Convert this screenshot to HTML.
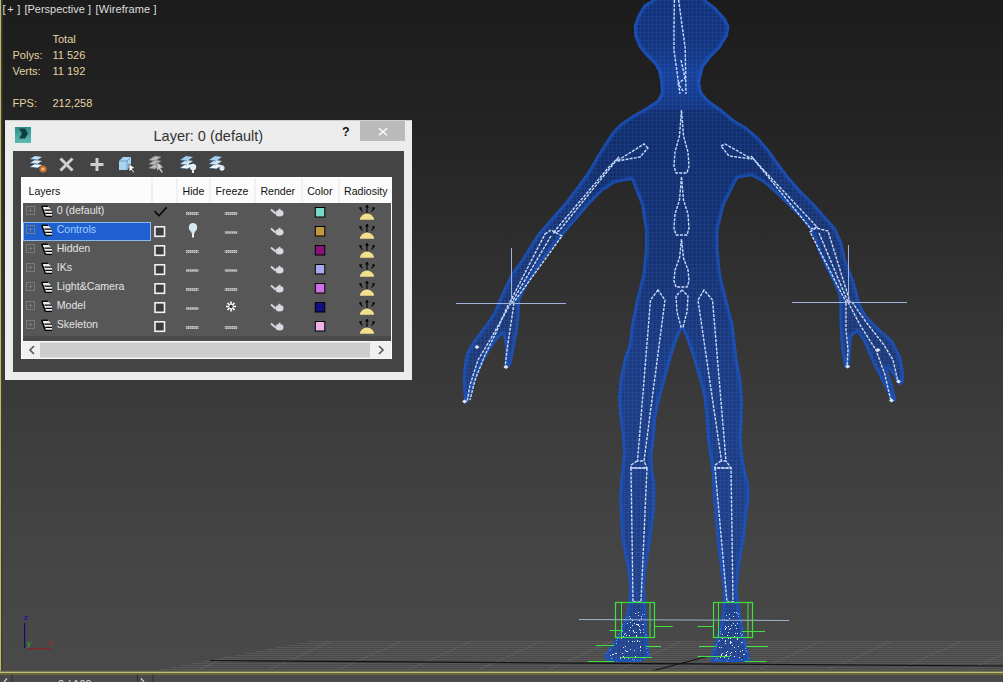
<!DOCTYPE html>
<html><head><meta charset="utf-8">
<style>
html,body{margin:0;padding:0;width:1003px;height:682px;overflow:hidden;background:#1e1e1e;}
svg{position:absolute;left:0;top:0;font-family:"Liberation Sans",sans-serif;}
</style></head><body>
<svg width="1003" height="682" viewBox="0 0 1003 682">
 <defs>
  <linearGradient id="bg" x1="0" y1="0" x2="0" y2="674" gradientUnits="userSpaceOnUse">
   <stop offset="0" stop-color="#1c1c1c"/>
   <stop offset="0.2" stop-color="#242424"/>
   <stop offset="0.5" stop-color="#363636"/>
   <stop offset="0.8" stop-color="#444444"/>
   <stop offset="1" stop-color="#4a4a4a"/>
  </linearGradient>
  <linearGradient id="armL" x1="628" y1="0" x2="545" y2="0" gradientUnits="userSpaceOnUse">
   <stop offset="0" stop-color="#fff"/><stop offset="1" stop-color="#d8d8d8"/>
  </linearGradient>
  <linearGradient id="armR" x1="738" y1="0" x2="820" y2="0" gradientUnits="userSpaceOnUse">
   <stop offset="0" stop-color="#fff"/><stop offset="1" stop-color="#d8d8d8"/>
  </linearGradient>
  <linearGradient id="torsoDark" x1="0" y1="90" x2="0" y2="360" gradientUnits="userSpaceOnUse">
   <stop offset="0" stop-color="#000" stop-opacity="0"/>
   <stop offset="0.12" stop-color="#000" stop-opacity="0.13"/>
   <stop offset="0.7" stop-color="#000" stop-opacity="0.11"/>
   <stop offset="1" stop-color="#000" stop-opacity="0"/>
  </linearGradient>
  <filter id="soft" x="-5%" y="-5%" width="110%" height="110%"><feGaussianBlur stdDeviation="1.1"/></filter>
  <linearGradient id="headBright" x1="0" y1="0" x2="0" y2="110" gradientUnits="userSpaceOnUse">
   <stop offset="0" stop-color="#1a4aa8" stop-opacity="0.05"/>
   <stop offset="0.4" stop-color="#1a4aa8" stop-opacity="0.15"/>
   <stop offset="0.65" stop-color="#1f55c0" stop-opacity="0.45"/>
   <stop offset="1" stop-color="#1f55c0" stop-opacity="0.2"/>
  </linearGradient>
  <mask id="amask" maskUnits="userSpaceOnUse" x="0" y="0" width="1003" height="682">
   <rect x="0" y="0" width="1003" height="682" fill="#fff"/>
   <rect x="440" y="120" width="188" height="300" fill="url(#armL)"/>
   <rect x="738" y="120" width="190" height="300" fill="url(#armR)"/>
  </mask>
  <pattern id="mesh" width="4" height="4" patternUnits="userSpaceOnUse">
   <path d="M0,0.5 H4 M0.5,0 V4" stroke="#3a70d0" stroke-width="1"/>
  </pattern>
  <pattern id="vdots" width="5" height="4" patternUnits="userSpaceOnUse">
   <rect x="1" y="1" width="1" height="1" fill="#d8e4ff"/><rect x="3" y="3" width="1" height="1" fill="#b8ccf0"/>
  </pattern>
  <pattern id="dots" width="2" height="2" patternUnits="userSpaceOnUse">
   <rect width="2" height="2" fill="#9a9a9a"/>
   <rect width="1" height="1" fill="#c8c8c8"/>
  </pattern>
 </defs>
 <rect x="0" y="0" width="1003" height="682" fill="url(#bg)"/>
 <g id="grid">
 <line x1="308.4" y1="641.5" x2="1003" y2="641.5" stroke="#585858" stroke-width="1"/>
 <line x1="297.8" y1="643.5" x2="1003" y2="643.5" stroke="#585858" stroke-width="1"/>
 <line x1="287.2" y1="645.5" x2="1003" y2="645.5" stroke="#585858" stroke-width="1"/>
 <line x1="276.7" y1="647.5" x2="1003" y2="647.5" stroke="#585858" stroke-width="1"/>
 <line x1="266.1" y1="649.5" x2="1003" y2="649.5" stroke="#585858" stroke-width="1"/>
 <line x1="255.6" y1="651.5" x2="1003" y2="651.5" stroke="#585858" stroke-width="1"/>
 <line x1="245.0" y1="653.5" x2="1003" y2="653.5" stroke="#585858" stroke-width="1"/>
 <line x1="234.5" y1="655.5" x2="1003" y2="655.5" stroke="#585858" stroke-width="1"/>
 <line x1="223.9" y1="657.5" x2="1003" y2="657.5" stroke="#585858" stroke-width="1"/>
 <line x1="213.3" y1="659.5" x2="1003" y2="659.5" stroke="#585858" stroke-width="1"/>
 <line x1="202.8" y1="661.5" x2="1003" y2="661.5" stroke="#585858" stroke-width="1"/>
 <line x1="192.2" y1="663.5" x2="1003" y2="663.5" stroke="#585858" stroke-width="1"/>
 <line x1="181.7" y1="665.5" x2="1003" y2="665.5" stroke="#585858" stroke-width="1"/>
 <line x1="171.1" y1="667.5" x2="1003" y2="667.5" stroke="#585858" stroke-width="1"/>
 <line x1="160.6" y1="669.5" x2="1003" y2="669.5" stroke="#585858" stroke-width="1"/>
 <clipPath id="gclip"><polygon points="150,671 311,640.5 1003,640.5 1003,671"/></clipPath><g clip-path="url(#gclip)">
 <line x1="200" y1="669" x2="262" y2="641" stroke="#5e5e5e" stroke-width="1"/>
 <line x1="270" y1="669" x2="332" y2="641" stroke="#5e5e5e" stroke-width="1"/>
 <line x1="340" y1="669" x2="402" y2="641" stroke="#5e5e5e" stroke-width="1"/>
 <line x1="410" y1="669" x2="472" y2="641" stroke="#5e5e5e" stroke-width="1"/>
 <line x1="480" y1="669" x2="542" y2="641" stroke="#5e5e5e" stroke-width="1"/>
 <line x1="550" y1="669" x2="612" y2="641" stroke="#5e5e5e" stroke-width="1"/>
 <line x1="620" y1="669" x2="682" y2="641" stroke="#5e5e5e" stroke-width="1"/>
 <line x1="690" y1="669" x2="752" y2="641" stroke="#5e5e5e" stroke-width="1"/>
 <line x1="760" y1="669" x2="822" y2="641" stroke="#5e5e5e" stroke-width="1"/>
 <line x1="830" y1="669" x2="892" y2="641" stroke="#5e5e5e" stroke-width="1"/>
 <line x1="900" y1="669" x2="962" y2="641" stroke="#5e5e5e" stroke-width="1"/>
 <line x1="970" y1="669" x2="1032" y2="641" stroke="#5e5e5e" stroke-width="1"/>
 <line x1="1040" y1="669" x2="1102" y2="641" stroke="#5e5e5e" stroke-width="1"/>
 </g>
 <line x1="210" y1="660.5" x2="1003" y2="666" stroke="#111" stroke-width="1.2"/>
 <line x1="652" y1="671" x2="709" y2="656" stroke="#111" stroke-width="1"/>
 </g>
 <clipPath id="bclip"><path d="M654,-6 L652,0 L643.9,4.8 L638,14.4 L633.8,26.3 L634.4,35.9 L639.1,47.8 L646.3,56.2 L654.7,64.6 L658.5,72 L660.5,82.9 L661,92.4 L657.2,100 L645.8,107.7 L632.4,115.3 L621,123 L613,131 L607.5,139 L596.5,156.4 L588.3,170.8 L578,185.2 L565.7,201.6 L551.3,218 L537,234.5 L526,252 L519.6,262 L510.8,274 L505,286 L499,299.2 L493.4,312.9 L482.1,329 L472.4,342 L466,353.2 L463.5,367.7 L462.7,380.6 L463.5,393.5 L464.4,403.2 L467.6,403.2 L472.4,390.3 L477.3,375.8 L483.7,361.3 L490.2,350 L498.2,338.7 L503,333.9 L505.5,348.4 L504.7,364.5 L507.1,369.4 L511.1,364.5 L514.4,348.4 L517.6,332.3 L519.5,316 L520,300 L528.4,283 L541,263.2 L553.4,246.8 L565.7,232.4 L578,218 L590.3,203.7 L602.7,191.3 L615,183.1 L631.4,180 L641.2,205 L645,229.8 L645,249.8 L642.4,274.7 L636.2,299.6 L631.2,324.5 L628.7,345 L623.8,359 L620,378.1 L618.1,397.2 L619.5,416.3 L622,435.3 L623,454.7 L621.5,469.3 L620,484 L619.3,498.6 L620,513.3 L621.5,540 L624.5,555.3 L628,574.4 L629.6,590 L627.2,609.3 L624,621 L618,635.7 L611,646 L604,656 L608,662 L640,662 L650,656 L648.5,646 L647,631.3 L646.3,609.3 L644.8,590 L645.8,574.4 L648.5,555.3 L651,540 L654.5,513.3 L655.3,498.6 L655.3,484 L653,469.3 L652.3,454.7 L654.5,440 L656,420 L658.5,405 L664.5,383.3 L672.5,354 L678,338 L682,329 L686,338 L691.6,354 L700.4,383.3 L703.5,397 L705,410 L706,425 L707.1,440 L709.3,454.7 L711.5,469.3 L712.3,484 L713,498.6 L714.5,513.3 L716.7,540 L718.5,555.3 L721,574.4 L723,590 L722.5,609.3 L719.6,628.4 L715.2,641.6 L711.5,653.3 L710.8,662 L750.4,662 L749,653.3 L746,641.6 L743,628.4 L740.1,609.3 L737.3,590 L739,574.4 L741.5,555.3 L744.5,540 L747.4,513.3 L749.6,498.6 L749,484 L745.2,469.3 L743,454.7 L741.6,440 L742.5,420 L743,400 L741.1,378.1 L737.3,359 L735.8,345 L733.4,324.5 L727.1,299.6 L721,274.7 L718.4,249.8 L718.4,229.8 L724.6,205 L737,180 L739.4,178 L751.7,176.3 L764,183.3 L778,195.7 L790.4,208 L801,218.5 L809.7,229 L815,240 L818,251 L825.5,267 L832.5,281 L838.1,293.3 L839.6,305 L839.5,320 L840,330 L841.1,348.4 L844.4,367.7 L849.2,367.7 L850.8,351.6 L851.6,337 L857.3,332.3 L863.7,342 L870.2,358 L878.2,374.2 L886.3,390.3 L891,401.6 L896.5,401 L893,386 L887,368 L893,375 L899.2,385.5 L904,382.3 L904,372.6 L900.8,356.5 L892.7,340.3 L879.8,329 L866.9,316 L860,303 L854,280 L846,260 L842.2,242.7 L836,228.3 L827.3,218.5 L815,204.5 L801,190.4 L788.6,176.3 L778,162.2 L769.3,150 L758.7,137.6 L746.4,127 L734,119.5 L722,109.6 L708.7,100 L702,92.4 L700,82.9 L701.3,76 L703.7,67 L711,57.4 L720.5,47.8 L727.7,35.9 L729.4,26.3 L725.3,18 L715.7,7.2 L706,0 L704,-6 Z"/></clipPath>
 <path d="M654,-6 L652,0 L643.9,4.8 L638,14.4 L633.8,26.3 L634.4,35.9 L639.1,47.8 L646.3,56.2 L654.7,64.6 L658.5,72 L660.5,82.9 L661,92.4 L657.2,100 L645.8,107.7 L632.4,115.3 L621,123 L613,131 L607.5,139 L596.5,156.4 L588.3,170.8 L578,185.2 L565.7,201.6 L551.3,218 L537,234.5 L526,252 L519.6,262 L510.8,274 L505,286 L499,299.2 L493.4,312.9 L482.1,329 L472.4,342 L466,353.2 L463.5,367.7 L462.7,380.6 L463.5,393.5 L464.4,403.2 L467.6,403.2 L472.4,390.3 L477.3,375.8 L483.7,361.3 L490.2,350 L498.2,338.7 L503,333.9 L505.5,348.4 L504.7,364.5 L507.1,369.4 L511.1,364.5 L514.4,348.4 L517.6,332.3 L519.5,316 L520,300 L528.4,283 L541,263.2 L553.4,246.8 L565.7,232.4 L578,218 L590.3,203.7 L602.7,191.3 L615,183.1 L631.4,180 L641.2,205 L645,229.8 L645,249.8 L642.4,274.7 L636.2,299.6 L631.2,324.5 L628.7,345 L623.8,359 L620,378.1 L618.1,397.2 L619.5,416.3 L622,435.3 L623,454.7 L621.5,469.3 L620,484 L619.3,498.6 L620,513.3 L621.5,540 L624.5,555.3 L628,574.4 L629.6,590 L627.2,609.3 L624,621 L618,635.7 L611,646 L604,656 L608,662 L640,662 L650,656 L648.5,646 L647,631.3 L646.3,609.3 L644.8,590 L645.8,574.4 L648.5,555.3 L651,540 L654.5,513.3 L655.3,498.6 L655.3,484 L653,469.3 L652.3,454.7 L654.5,440 L656,420 L658.5,405 L664.5,383.3 L672.5,354 L678,338 L682,329 L686,338 L691.6,354 L700.4,383.3 L703.5,397 L705,410 L706,425 L707.1,440 L709.3,454.7 L711.5,469.3 L712.3,484 L713,498.6 L714.5,513.3 L716.7,540 L718.5,555.3 L721,574.4 L723,590 L722.5,609.3 L719.6,628.4 L715.2,641.6 L711.5,653.3 L710.8,662 L750.4,662 L749,653.3 L746,641.6 L743,628.4 L740.1,609.3 L737.3,590 L739,574.4 L741.5,555.3 L744.5,540 L747.4,513.3 L749.6,498.6 L749,484 L745.2,469.3 L743,454.7 L741.6,440 L742.5,420 L743,400 L741.1,378.1 L737.3,359 L735.8,345 L733.4,324.5 L727.1,299.6 L721,274.7 L718.4,249.8 L718.4,229.8 L724.6,205 L737,180 L739.4,178 L751.7,176.3 L764,183.3 L778,195.7 L790.4,208 L801,218.5 L809.7,229 L815,240 L818,251 L825.5,267 L832.5,281 L838.1,293.3 L839.6,305 L839.5,320 L840,330 L841.1,348.4 L844.4,367.7 L849.2,367.7 L850.8,351.6 L851.6,337 L857.3,332.3 L863.7,342 L870.2,358 L878.2,374.2 L886.3,390.3 L891,401.6 L896.5,401 L893,386 L887,368 L893,375 L899.2,385.5 L904,382.3 L904,372.6 L900.8,356.5 L892.7,340.3 L879.8,329 L866.9,316 L860,303 L854,280 L846,260 L842.2,242.7 L836,228.3 L827.3,218.5 L815,204.5 L801,190.4 L788.6,176.3 L778,162.2 L769.3,150 L758.7,137.6 L746.4,127 L734,119.5 L722,109.6 L708.7,100 L702,92.4 L700,82.9 L701.3,76 L703.7,67 L711,57.4 L720.5,47.8 L727.7,35.9 L729.4,26.3 L725.3,18 L715.7,7.2 L706,0 L704,-6 Z" fill="#0a3cb0" fill-opacity="0.6" mask="url(#amask)"/>
 <g clip-path="url(#bclip)">
  <rect x="450" y="0" width="470" height="670" fill="url(#mesh)" opacity="0.22"/>
  <rect x="647" y="652" width="1" height="1" fill="#dfe8ff"/><rect x="628" y="641" width="1" height="1" fill="#dfe8ff"/><rect x="637" y="640" width="1" height="1" fill="#dfe8ff"/><rect x="623" y="636" width="1" height="1" fill="#dfe8ff"/><rect x="626" y="617" width="1" height="1" fill="#dfe8ff"/><rect x="609" y="650" width="1" height="1" fill="#dfe8ff"/><rect x="643" y="632" width="1" height="1" fill="#dfe8ff"/><rect x="627" y="623" width="1" height="1" fill="#dfe8ff"/><rect x="636" y="636" width="1" height="1" fill="#dfe8ff"/><rect x="616" y="643" width="1" height="1" fill="#dfe8ff"/><rect x="632" y="620" width="1" height="1" fill="#dfe8ff"/><rect x="639" y="629" width="1" height="1" fill="#dfe8ff"/><rect x="640" y="630" width="1" height="1" fill="#dfe8ff"/><rect x="625" y="650" width="1" height="1" fill="#dfe8ff"/><rect x="635" y="637" width="1" height="1" fill="#dfe8ff"/><rect x="640" y="646" width="1" height="1" fill="#dfe8ff"/><rect x="634" y="623" width="1" height="1" fill="#dfe8ff"/><rect x="630" y="622" width="1" height="1" fill="#dfe8ff"/><rect x="613" y="645" width="1" height="1" fill="#dfe8ff"/><rect x="627" y="651" width="1" height="1" fill="#dfe8ff"/><rect x="622" y="653" width="1" height="1" fill="#dfe8ff"/><rect x="639" y="626" width="1" height="1" fill="#dfe8ff"/><rect x="637" y="641" width="1" height="1" fill="#dfe8ff"/><rect x="640" y="632" width="1" height="1" fill="#dfe8ff"/><rect x="620" y="657" width="1" height="1" fill="#dfe8ff"/><rect x="626" y="635" width="1" height="1" fill="#dfe8ff"/><rect x="616" y="640" width="1" height="1" fill="#dfe8ff"/><rect x="638" y="625" width="1" height="1" fill="#dfe8ff"/><rect x="618" y="634" width="1" height="1" fill="#dfe8ff"/><rect x="623" y="647" width="1" height="1" fill="#dfe8ff"/><rect x="634" y="659" width="1" height="1" fill="#dfe8ff"/><rect x="625" y="633" width="1" height="1" fill="#dfe8ff"/><rect x="630" y="627" width="1" height="1" fill="#dfe8ff"/><rect x="609" y="661" width="1" height="1" fill="#dfe8ff"/><rect x="641" y="618" width="1" height="1" fill="#dfe8ff"/><rect x="623" y="657" width="1" height="1" fill="#dfe8ff"/><rect x="611" y="658" width="1" height="1" fill="#dfe8ff"/><rect x="612" y="654" width="1" height="1" fill="#dfe8ff"/><rect x="610" y="655" width="1" height="1" fill="#dfe8ff"/><rect x="641" y="618" width="1" height="1" fill="#dfe8ff"/><rect x="638" y="612" width="1" height="1" fill="#dfe8ff"/><rect x="629" y="635" width="1" height="1" fill="#dfe8ff"/><rect x="610" y="649" width="1" height="1" fill="#dfe8ff"/><rect x="639" y="620" width="1" height="1" fill="#dfe8ff"/><rect x="613" y="654" width="1" height="1" fill="#dfe8ff"/><rect x="643" y="624" width="1" height="1" fill="#dfe8ff"/><rect x="645" y="634" width="1" height="1" fill="#dfe8ff"/><rect x="624" y="634" width="1" height="1" fill="#dfe8ff"/><rect x="640" y="660" width="1" height="1" fill="#dfe8ff"/><rect x="637" y="660" width="1" height="1" fill="#dfe8ff"/><rect x="631" y="637" width="1" height="1" fill="#dfe8ff"/><rect x="606" y="653" width="1" height="1" fill="#dfe8ff"/><rect x="621" y="638" width="1" height="1" fill="#dfe8ff"/><rect x="635" y="613" width="1" height="1" fill="#dfe8ff"/><rect x="620" y="630" width="1" height="1" fill="#dfe8ff"/><rect x="616" y="653" width="1" height="1" fill="#dfe8ff"/><rect x="622" y="624" width="1" height="1" fill="#dfe8ff"/><rect x="632" y="659" width="1" height="1" fill="#dfe8ff"/><rect x="632" y="641" width="1" height="1" fill="#dfe8ff"/><rect x="621" y="638" width="1" height="1" fill="#dfe8ff"/><rect x="635" y="656" width="1" height="1" fill="#dfe8ff"/><rect x="621" y="629" width="1" height="1" fill="#dfe8ff"/><rect x="648" y="654" width="1" height="1" fill="#dfe8ff"/><rect x="642" y="614" width="1" height="1" fill="#dfe8ff"/><rect x="615" y="653" width="1" height="1" fill="#dfe8ff"/><rect x="644" y="658" width="1" height="1" fill="#dfe8ff"/><rect x="638" y="625" width="1" height="1" fill="#dfe8ff"/><rect x="644" y="614" width="1" height="1" fill="#dfe8ff"/><rect x="646" y="648" width="1" height="1" fill="#dfe8ff"/><rect x="625" y="620" width="1" height="1" fill="#dfe8ff"/><rect x="632" y="657" width="1" height="1" fill="#dfe8ff"/><rect x="629" y="616" width="1" height="1" fill="#dfe8ff"/><rect x="637" y="624" width="1" height="1" fill="#dfe8ff"/><rect x="642" y="624" width="1" height="1" fill="#dfe8ff"/><rect x="636" y="657" width="1" height="1" fill="#dfe8ff"/><rect x="646" y="635" width="1" height="1" fill="#dfe8ff"/><rect x="636" y="624" width="1" height="1" fill="#dfe8ff"/><rect x="635" y="613" width="1" height="1" fill="#dfe8ff"/><rect x="634" y="650" width="1" height="1" fill="#dfe8ff"/><rect x="634" y="632" width="1" height="1" fill="#dfe8ff"/><rect x="622" y="631" width="1" height="1" fill="#dfe8ff"/><rect x="633" y="660" width="1" height="1" fill="#dfe8ff"/><rect x="628" y="658" width="1" height="1" fill="#dfe8ff"/><rect x="643" y="629" width="1" height="1" fill="#dfe8ff"/><rect x="629" y="630" width="1" height="1" fill="#dfe8ff"/><rect x="640" y="647" width="1" height="1" fill="#dfe8ff"/><rect x="636" y="635" width="1" height="1" fill="#dfe8ff"/><rect x="630" y="649" width="1" height="1" fill="#dfe8ff"/><rect x="638" y="615" width="1" height="1" fill="#dfe8ff"/><rect x="641" y="616" width="1" height="1" fill="#dfe8ff"/><rect x="636" y="632" width="1" height="1" fill="#dfe8ff"/><rect x="638" y="624" width="1" height="1" fill="#dfe8ff"/><rect x="623" y="656" width="1" height="1" fill="#dfe8ff"/><rect x="640" y="650" width="1" height="1" fill="#dfe8ff"/><rect x="633" y="630" width="1" height="1" fill="#dfe8ff"/><rect x="639" y="641" width="1" height="1" fill="#dfe8ff"/><rect x="625" y="646" width="1" height="1" fill="#dfe8ff"/><rect x="613" y="643" width="1" height="1" fill="#dfe8ff"/><rect x="622" y="626" width="1" height="1" fill="#dfe8ff"/><rect x="630" y="618" width="1" height="1" fill="#dfe8ff"/><rect x="633" y="631" width="1" height="1" fill="#dfe8ff"/><rect x="619" y="633" width="1" height="1" fill="#dfe8ff"/><rect x="630" y="661" width="1" height="1" fill="#dfe8ff"/><rect x="632" y="625" width="1" height="1" fill="#dfe8ff"/><rect x="624" y="658" width="1" height="1" fill="#dfe8ff"/><rect x="626" y="651" width="1" height="1" fill="#dfe8ff"/><rect x="617" y="638" width="1" height="1" fill="#dfe8ff"/><rect x="616" y="661" width="1" height="1" fill="#dfe8ff"/><rect x="634" y="641" width="1" height="1" fill="#dfe8ff"/><rect x="620" y="658" width="1" height="1" fill="#dfe8ff"/><rect x="735" y="651" width="1" height="1" fill="#dfe8ff"/><rect x="745" y="648" width="1" height="1" fill="#dfe8ff"/><rect x="726" y="620" width="1" height="1" fill="#dfe8ff"/><rect x="721" y="647" width="1" height="1" fill="#dfe8ff"/><rect x="722" y="638" width="1" height="1" fill="#dfe8ff"/><rect x="736" y="612" width="1" height="1" fill="#dfe8ff"/><rect x="715" y="659" width="1" height="1" fill="#dfe8ff"/><rect x="736" y="628" width="1" height="1" fill="#dfe8ff"/><rect x="727" y="656" width="1" height="1" fill="#dfe8ff"/><rect x="741" y="659" width="1" height="1" fill="#dfe8ff"/><rect x="731" y="652" width="1" height="1" fill="#dfe8ff"/><rect x="731" y="642" width="1" height="1" fill="#dfe8ff"/><rect x="733" y="616" width="1" height="1" fill="#dfe8ff"/><rect x="727" y="620" width="1" height="1" fill="#dfe8ff"/><rect x="718" y="660" width="1" height="1" fill="#dfe8ff"/><rect x="738" y="616" width="1" height="1" fill="#dfe8ff"/><rect x="737" y="613" width="1" height="1" fill="#dfe8ff"/><rect x="739" y="637" width="1" height="1" fill="#dfe8ff"/><rect x="716" y="644" width="1" height="1" fill="#dfe8ff"/><rect x="719" y="640" width="1" height="1" fill="#dfe8ff"/><rect x="737" y="623" width="1" height="1" fill="#dfe8ff"/><rect x="740" y="633" width="1" height="1" fill="#dfe8ff"/><rect x="711" y="656" width="1" height="1" fill="#dfe8ff"/><rect x="719" y="647" width="1" height="1" fill="#dfe8ff"/><rect x="732" y="645" width="1" height="1" fill="#dfe8ff"/><rect x="721" y="647" width="1" height="1" fill="#dfe8ff"/><rect x="720" y="631" width="1" height="1" fill="#dfe8ff"/><rect x="728" y="638" width="1" height="1" fill="#dfe8ff"/><rect x="725" y="643" width="1" height="1" fill="#dfe8ff"/><rect x="726" y="652" width="1" height="1" fill="#dfe8ff"/><rect x="729" y="629" width="1" height="1" fill="#dfe8ff"/><rect x="731" y="625" width="1" height="1" fill="#dfe8ff"/><rect x="743" y="654" width="1" height="1" fill="#dfe8ff"/><rect x="740" y="651" width="1" height="1" fill="#dfe8ff"/><rect x="740" y="651" width="1" height="1" fill="#dfe8ff"/><rect x="722" y="653" width="1" height="1" fill="#dfe8ff"/><rect x="739" y="613" width="1" height="1" fill="#dfe8ff"/><rect x="728" y="626" width="1" height="1" fill="#dfe8ff"/><rect x="728" y="632" width="1" height="1" fill="#dfe8ff"/><rect x="737" y="639" width="1" height="1" fill="#dfe8ff"/><rect x="742" y="642" width="1" height="1" fill="#dfe8ff"/><rect x="741" y="642" width="1" height="1" fill="#dfe8ff"/><rect x="720" y="657" width="1" height="1" fill="#dfe8ff"/><rect x="727" y="651" width="1" height="1" fill="#dfe8ff"/><rect x="725" y="640" width="1" height="1" fill="#dfe8ff"/><rect x="742" y="634" width="1" height="1" fill="#dfe8ff"/><rect x="726" y="615" width="1" height="1" fill="#dfe8ff"/><rect x="746" y="651" width="1" height="1" fill="#dfe8ff"/><rect x="725" y="626" width="1" height="1" fill="#dfe8ff"/><rect x="726" y="656" width="1" height="1" fill="#dfe8ff"/><rect x="725" y="655" width="1" height="1" fill="#dfe8ff"/><rect x="731" y="652" width="1" height="1" fill="#dfe8ff"/><rect x="722" y="634" width="1" height="1" fill="#dfe8ff"/><rect x="737" y="638" width="1" height="1" fill="#dfe8ff"/><rect x="722" y="619" width="1" height="1" fill="#dfe8ff"/><rect x="734" y="636" width="1" height="1" fill="#dfe8ff"/><rect x="720" y="633" width="1" height="1" fill="#dfe8ff"/><rect x="746" y="650" width="1" height="1" fill="#dfe8ff"/><rect x="726" y="660" width="1" height="1" fill="#dfe8ff"/><rect x="749" y="661" width="1" height="1" fill="#dfe8ff"/><rect x="739" y="657" width="1" height="1" fill="#dfe8ff"/><rect x="729" y="614" width="1" height="1" fill="#dfe8ff"/><rect x="721" y="647" width="1" height="1" fill="#dfe8ff"/><rect x="717" y="658" width="1" height="1" fill="#dfe8ff"/><rect x="734" y="656" width="1" height="1" fill="#dfe8ff"/><rect x="730" y="643" width="1" height="1" fill="#dfe8ff"/><rect x="727" y="635" width="1" height="1" fill="#dfe8ff"/><rect x="730" y="628" width="1" height="1" fill="#dfe8ff"/><rect x="738" y="614" width="1" height="1" fill="#dfe8ff"/><rect x="725" y="629" width="1" height="1" fill="#dfe8ff"/><rect x="728" y="638" width="1" height="1" fill="#dfe8ff"/><rect x="741" y="622" width="1" height="1" fill="#dfe8ff"/><rect x="725" y="641" width="1" height="1" fill="#dfe8ff"/><rect x="725" y="628" width="1" height="1" fill="#dfe8ff"/><rect x="730" y="655" width="1" height="1" fill="#dfe8ff"/><rect x="741" y="635" width="1" height="1" fill="#dfe8ff"/><rect x="735" y="625" width="1" height="1" fill="#dfe8ff"/><rect x="726" y="655" width="1" height="1" fill="#dfe8ff"/><rect x="734" y="647" width="1" height="1" fill="#dfe8ff"/><rect x="728" y="658" width="1" height="1" fill="#dfe8ff"/><rect x="730" y="638" width="1" height="1" fill="#dfe8ff"/><rect x="720" y="628" width="1" height="1" fill="#dfe8ff"/><rect x="724" y="657" width="1" height="1" fill="#dfe8ff"/><rect x="726" y="654" width="1" height="1" fill="#dfe8ff"/><rect x="748" y="658" width="1" height="1" fill="#dfe8ff"/><rect x="745" y="643" width="1" height="1" fill="#dfe8ff"/><rect x="725" y="656" width="1" height="1" fill="#dfe8ff"/><rect x="737" y="613" width="1" height="1" fill="#dfe8ff"/><rect x="730" y="642" width="1" height="1" fill="#dfe8ff"/><rect x="733" y="623" width="1" height="1" fill="#dfe8ff"/><rect x="735" y="633" width="1" height="1" fill="#dfe8ff"/><rect x="727" y="637" width="1" height="1" fill="#dfe8ff"/><rect x="714" y="649" width="1" height="1" fill="#dfe8ff"/><rect x="717" y="635" width="1" height="1" fill="#dfe8ff"/><rect x="721" y="647" width="1" height="1" fill="#dfe8ff"/><rect x="734" y="612" width="1" height="1" fill="#dfe8ff"/><rect x="718" y="641" width="1" height="1" fill="#dfe8ff"/><rect x="721" y="655" width="1" height="1" fill="#dfe8ff"/><rect x="721" y="654" width="1" height="1" fill="#dfe8ff"/><rect x="742" y="628" width="1" height="1" fill="#dfe8ff"/><rect x="730" y="653" width="1" height="1" fill="#dfe8ff"/><rect x="742" y="650" width="1" height="1" fill="#dfe8ff"/><rect x="738" y="646" width="1" height="1" fill="#dfe8ff"/><rect x="727" y="661" width="1" height="1" fill="#dfe8ff"/><rect x="737" y="633" width="1" height="1" fill="#dfe8ff"/><rect x="730" y="641" width="1" height="1" fill="#dfe8ff"/><rect x="744" y="654" width="1" height="1" fill="#dfe8ff"/><rect x="726" y="627" width="1" height="1" fill="#dfe8ff"/><rect x="729" y="618" width="1" height="1" fill="#dfe8ff"/><rect x="724" y="619" width="1" height="1" fill="#dfe8ff"/>
  <rect x="600" y="0" width="140" height="110" fill="url(#headBright)"/>
  <rect x="590" y="90" width="180" height="270" fill="url(#torsoDark)" opacity="0.75"/>
  <path d="M654,-6 L652,0 L643.9,4.8 L638,14.4 L633.8,26.3 L634.4,35.9 L639.1,47.8 L646.3,56.2 L654.7,64.6 L658.5,72 L660.5,82.9 L661,92.4 L657.2,100 L645.8,107.7 L632.4,115.3 L621,123 L613,131 L607.5,139 L596.5,156.4 L588.3,170.8 L578,185.2 L565.7,201.6 L551.3,218 L537,234.5 L526,252 L519.6,262 L510.8,274 L505,286 L499,299.2 L493.4,312.9 L482.1,329 L472.4,342 L466,353.2 L463.5,367.7 L462.7,380.6 L463.5,393.5 L464.4,403.2 L467.6,403.2 L472.4,390.3 L477.3,375.8 L483.7,361.3 L490.2,350 L498.2,338.7 L503,333.9 L505.5,348.4 L504.7,364.5 L507.1,369.4 L511.1,364.5 L514.4,348.4 L517.6,332.3 L519.5,316 L520,300 L528.4,283 L541,263.2 L553.4,246.8 L565.7,232.4 L578,218 L590.3,203.7 L602.7,191.3 L615,183.1 L631.4,180 L641.2,205 L645,229.8 L645,249.8 L642.4,274.7 L636.2,299.6 L631.2,324.5 L628.7,345 L623.8,359 L620,378.1 L618.1,397.2 L619.5,416.3 L622,435.3 L623,454.7 L621.5,469.3 L620,484 L619.3,498.6 L620,513.3 L621.5,540 L624.5,555.3 L628,574.4 L629.6,590 L627.2,609.3 L624,621 L618,635.7 L611,646 L604,656 L608,662 L640,662 L650,656 L648.5,646 L647,631.3 L646.3,609.3 L644.8,590 L645.8,574.4 L648.5,555.3 L651,540 L654.5,513.3 L655.3,498.6 L655.3,484 L653,469.3 L652.3,454.7 L654.5,440 L656,420 L658.5,405 L664.5,383.3 L672.5,354 L678,338 L682,329 L686,338 L691.6,354 L700.4,383.3 L703.5,397 L705,410 L706,425 L707.1,440 L709.3,454.7 L711.5,469.3 L712.3,484 L713,498.6 L714.5,513.3 L716.7,540 L718.5,555.3 L721,574.4 L723,590 L722.5,609.3 L719.6,628.4 L715.2,641.6 L711.5,653.3 L710.8,662 L750.4,662 L749,653.3 L746,641.6 L743,628.4 L740.1,609.3 L737.3,590 L739,574.4 L741.5,555.3 L744.5,540 L747.4,513.3 L749.6,498.6 L749,484 L745.2,469.3 L743,454.7 L741.6,440 L742.5,420 L743,400 L741.1,378.1 L737.3,359 L735.8,345 L733.4,324.5 L727.1,299.6 L721,274.7 L718.4,249.8 L718.4,229.8 L724.6,205 L737,180 L739.4,178 L751.7,176.3 L764,183.3 L778,195.7 L790.4,208 L801,218.5 L809.7,229 L815,240 L818,251 L825.5,267 L832.5,281 L838.1,293.3 L839.6,305 L839.5,320 L840,330 L841.1,348.4 L844.4,367.7 L849.2,367.7 L850.8,351.6 L851.6,337 L857.3,332.3 L863.7,342 L870.2,358 L878.2,374.2 L886.3,390.3 L891,401.6 L896.5,401 L893,386 L887,368 L893,375 L899.2,385.5 L904,382.3 L904,372.6 L900.8,356.5 L892.7,340.3 L879.8,329 L866.9,316 L860,303 L854,280 L846,260 L842.2,242.7 L836,228.3 L827.3,218.5 L815,204.5 L801,190.4 L788.6,176.3 L778,162.2 L769.3,150 L758.7,137.6 L746.4,127 L734,119.5 L722,109.6 L708.7,100 L702,92.4 L700,82.9 L701.3,76 L703.7,67 L711,57.4 L720.5,47.8 L727.7,35.9 L729.4,26.3 L725.3,18 L715.7,7.2 L706,0 L704,-6 Z" fill="none" stroke="#1d56c4" stroke-width="6" stroke-linejoin="round" stroke-opacity="0.75" filter="url(#soft)"/>
 </g>
 <g id="bones">
  <polyline points="674.4,0 674,30 674,50 680,94" fill="none" stroke="#c8dcff" stroke-width="1.4" stroke-dasharray="3 1.2"/>
  <polyline points="678.6,0 682,25 685.2,48 686,94" fill="none" stroke="#c8dcff" stroke-width="1.4" stroke-dasharray="3 1.2"/>
  <polyline points="681,60 685,78 678,84 684,92" fill="none" stroke="#c8dcff" stroke-width="1.4" stroke-dasharray="3 1.2"/>
  <polyline points="681.5,110 679.5,136 675,152 674,166 676,173 687,173 689,166 688,152 683.5,136 681.5,110" fill="none" stroke="#c8dcff" stroke-width="1.4" stroke-dasharray="3 1.2"/>
  <polyline points="681.5,177 679.5,200 675,214 674,228 676,235 687,235 689,228 688,214 683.5,200 681.5,177" fill="none" stroke="#c8dcff" stroke-width="1.4" stroke-dasharray="3 1.2"/>
  <polyline points="681.5,239 679.5,258 675,270 674,281 676,287 687,287 689,281 688,270 683.5,258 681.5,239" fill="none" stroke="#c8dcff" stroke-width="1.4" stroke-dasharray="3 1.2"/>
  <polyline points="682,290 676,296 677,312 681,327 683,327 687,312 688,296 682,290" fill="none" stroke="#c8dcff" stroke-width="1.4" stroke-dasharray="3 1.2"/>
  <polygon points="658,290 650.5,300 637.5,461 644,461 665,300" fill="none" stroke="#c8dcff" stroke-width="1.4" stroke-dasharray="3 1.2"/>
  <polygon points="704,290 698,300 721.5,461 726,461 712.5,300" fill="none" stroke="#c8dcff" stroke-width="1.4" stroke-dasharray="3 1.2"/>
  <polygon points="631,468 633,602 641,602 647,468" fill="none" stroke="#c8dcff" stroke-width="1.4" stroke-dasharray="3 1.2"/>
  <polyline points="637,461 631,465 631,468 647,468 644,461" fill="none" stroke="#c8dcff" stroke-width="1.4" stroke-dasharray="3 1.2"/>
  <polyline points="721,461 715,465 715,468 731,468 726,461" fill="none" stroke="#c8dcff" stroke-width="1.4" stroke-dasharray="3 1.2"/>
  <polygon points="715,468 727,602 733,602 731,468" fill="none" stroke="#c8dcff" stroke-width="1.4" stroke-dasharray="3 1.2"/>
  <polygon points="648,148 644,144 617,161 640,157" fill="none" stroke="#c8dcff" stroke-width="1.4" stroke-dasharray="3 1.2"/>
  <polygon points="721,146 725,144 752,159 729,156" fill="none" stroke="#c8dcff" stroke-width="1.4" stroke-dasharray="3 1.2"/>
  <polygon points="619,157 609,167 553,233 559,231" fill="none" stroke="#c8dcff" stroke-width="1.4" stroke-dasharray="3 1.2"/>
  <polygon points="751,156 759,165 817,227 811,229" fill="none" stroke="#c8dcff" stroke-width="1.4" stroke-dasharray="3 1.2"/>
  <polygon points="545,234 551,230 562,236 514,302 510,302" fill="none" stroke="#c8dcff" stroke-width="1.4" stroke-dasharray="3 1.2"/>
  <polyline points="551,236 512,302" fill="none" stroke="#c8dcff" stroke-width="1.4" stroke-dasharray="3 1.2"/>
  <polygon points="810,232 816,228 828,231 850,302 846,302" fill="none" stroke="#c8dcff" stroke-width="1.4" stroke-dasharray="3 1.2"/>
  <polyline points="819,233 848,302" fill="none" stroke="#c8dcff" stroke-width="1.4" stroke-dasharray="3 1.2"/>
  <polyline points="511,303 490,340 478,360 470,385 467,402" fill="none" stroke="#c8dcff" stroke-width="1.4" stroke-dasharray="3 1.2"/>
  <polyline points="514,303 510,330 507,350 505,368" fill="none" stroke="#c8dcff" stroke-width="1.4" stroke-dasharray="3 1.2"/>
  <polyline points="508,305 495,335 485,355 475,380 470,400" fill="none" stroke="#c8dcff" stroke-width="1.4" stroke-dasharray="3 1.2"/>
  <polyline points="848,302 860,325 876,350 885,375 891,401" fill="none" stroke="#c8dcff" stroke-width="1.4" stroke-dasharray="3 1.2"/>
  <polyline points="852,302 866,322 884,345 893,360 898,382" fill="none" stroke="#c8dcff" stroke-width="1.4" stroke-dasharray="3 1.2"/>
  <polyline points="846,303 846,330 848,350 847,367" fill="none" stroke="#c8dcff" stroke-width="1.4" stroke-dasharray="3 1.2"/>
  <path d="M462.0,401.5 L464.5,399.5 L467.0,401.5 L464.5,403.5 Z" fill="#e0e8f8"/>
  <path d="M503.5,367 L506,365 L508.5,367 L506,369 Z" fill="#e0e8f8"/>
  <path d="M474.5,347 L477,345 L479.5,347 L477,349 Z" fill="#e0e8f8"/>
  <path d="M845.1,366.5 L847.6,364.5 L850.1,366.5 L847.6,368.5 Z" fill="#e0e8f8"/>
  <path d="M889.0,400.5 L891.5,398.5 L894.0,400.5 L891.5,402.5 Z" fill="#e0e8f8"/>
  <path d="M896.0,381.5 L898.5,379.5 L901.0,381.5 L898.5,383.5 Z" fill="#e0e8f8"/>
  <path d="M875.5,350 L878,348 L880.5,350 L878,352 Z" fill="#e0e8f8"/>
 </g>
 <g stroke="#9fb4d8" stroke-width="1" fill="none">
  <line x1="511.5" y1="248" x2="511.5" y2="303"/>
  <line x1="456" y1="303.5" x2="566" y2="303.5"/>
  <line x1="848.5" y1="245" x2="848.5" y2="302"/>
  <line x1="792" y1="302.5" x2="907" y2="302.5"/>
  <line x1="579" y1="619.5" x2="789" y2="620.5"/>
 </g>
 <g id="feet"><rect x="615.5" y="602.5" width="39.0" height="35" fill="none" stroke="#3ee03e" stroke-width="1.2"/>
 <line x1="621.5" y1="603" x2="621.5" y2="637" stroke="#3ee03e" stroke-width="1"/>
 <line x1="650" y1="603" x2="650" y2="637" stroke="#3ee03e" stroke-width="1"/>
 <rect x="713.5" y="602.5" width="39.0" height="35" fill="none" stroke="#3ee03e" stroke-width="1.2"/>
 <line x1="718.5" y1="603" x2="718.5" y2="637" stroke="#3ee03e" stroke-width="1"/>
 <line x1="748" y1="603" x2="748" y2="637" stroke="#3ee03e" stroke-width="1"/>
 <line x1="609.6" y1="630.5" x2="622.8" y2="630.5" stroke="#3ee03e" stroke-width="1"/>
 <line x1="655" y1="626.5" x2="672.7" y2="626.5" stroke="#3ee03e" stroke-width="1"/>
 <line x1="595.7" y1="645.5" x2="614" y2="645.5" stroke="#3ee03e" stroke-width="1"/>
 <line x1="645.5" y1="646.5" x2="661" y2="646.5" stroke="#3ee03e" stroke-width="1"/>
 <line x1="587.6" y1="661.5" x2="614" y2="661.5" stroke="#3ee03e" stroke-width="1"/>
 <line x1="621.3" y1="657.5" x2="652" y2="657.5" stroke="#3ee03e" stroke-width="1"/>
 <line x1="697.6" y1="626.5" x2="713.7" y2="626.5" stroke="#3ee03e" stroke-width="1"/>
 <line x1="741.6" y1="631.5" x2="765" y2="631.5" stroke="#3ee03e" stroke-width="1"/>
 <line x1="699" y1="646.5" x2="716.7" y2="646.5" stroke="#3ee03e" stroke-width="1"/>
 <line x1="746" y1="646.5" x2="768" y2="646.5" stroke="#3ee03e" stroke-width="1"/>
 <line x1="697.6" y1="656.5" x2="730" y2="656.5" stroke="#3ee03e" stroke-width="1"/>
 <line x1="744.5" y1="661.5" x2="766.5" y2="661.5" stroke="#3ee03e" stroke-width="1"/></g>
 <g id="axis">
  <rect x="24" y="623" width="1.2" height="25" fill="#10106a"/>
  <rect x="28" y="648" width="23" height="1.2" fill="#8a2020"/>
  <text x="23.8" y="619.8" font-size="8" font-weight="bold" fill="#1a1aa0">z</text>
  <text x="27" y="646" font-size="8" fill="#30b030">y</text>
  <text x="48.6" y="645" font-size="8" fill="#b03030">x</text>
 </g>
 <!-- viewport border -->
 <rect x="0" y="0" width="1.1" height="674" fill="#bdb97e"/>
 <rect x="1.1" y="0" width="1.4" height="670" fill="#45411f"/>
 <rect x="0" y="670.6" width="1003" height="1.1" fill="#5e5c40"/>
 <rect x="0" y="671.7" width="1003" height="1.3" fill="#c0bb80"/>
 <rect x="0" y="673" width="1003" height="2" fill="#6a6638"/>
 <rect x="0" y="675" width="1003" height="7" fill="#4a4a4a"/>
 <rect x="11.5" y="674.5" width="1" height="8" fill="#2a2a2a"/>
 <rect x="137" y="674.5" width="1" height="8" fill="#2a2a2a"/>
 <rect x="152.5" y="674.5" width="1" height="8" fill="#2a2a2a"/>
 <text x="58" y="688" font-size="11" fill="#dcdcdc">0 / 100</text>
 <path d="M7,678.5 L4,682 M141,678.5 L144,682" stroke="#cfcfcf" stroke-width="1.2"/>

 <!-- viewport labels -->
 <g font-size="11" fill="#dedede" xml:space="preserve">
  <text x="2.5" y="13">[</text><text x="7.3" y="13">+</text><text x="17.3" y="13">]</text>
  <text x="24.4" y="13" textLength="66.6" lengthAdjust="spacing">[Perspective ]</text>
  <text x="95.5" y="13" textLength="61" lengthAdjust="spacing">[Wireframe ]</text>
 </g>
 <g font-size="11" fill="#e2d4a2">
  <text x="52.5" y="43">Total</text>
  <text x="12.5" y="59">Polys:</text><text x="52.5" y="59">11 526</text>
  <text x="12.5" y="75">Verts:</text><text x="52.5" y="75">11 192</text>
  <text x="12.5" y="107">FPS:</text><text x="52.5" y="107">212,258</text>
 </g>

 <rect x="5" y="120" width="407" height="260" fill="#ececec"/>
 <rect x="5" y="120" width="407" height="1" fill="#d0d0d0"/>
 <defs><linearGradient id="ic" x1="0" y1="0" x2="0" y2="1"><stop offset="0" stop-color="#2f8e8c"/><stop offset="1" stop-color="#5cbcb0"/></linearGradient></defs>
 <rect x="15" y="127" width="16" height="16" fill="url(#ic)"/>
 <path d="M19,128.5 L25,128.5 L28,133.5 L25,138.5 L19,138.5 L22,133.5 Z" fill="#0e3f40"/>
 <text x="153.5" y="140.7" font-size="14.5" fill="#333">Layer: 0 (default)</text>
 <text x="342" y="136" font-size="12.5" font-weight="bold" fill="#111">?</text>
 <rect x="360" y="121" width="45" height="20" fill="#bababa"/>
 <path d="M379,128.3 L387,135.2 M387,128.3 L379,135.2" stroke="#fff" stroke-width="1.3"/>
 <rect x="13" y="151" width="391" height="221" fill="#444444"/>
 <g transform="translate(29,156)"><path d="M1,3 L6,0 L13,1 L8,4 Z" fill="#bfe3f5"/><path d="M1,7 L6,4 L13,5 L8,8 Z" fill="#d8eefa"/><path d="M1,11 L6,8 L13,9 L8,12 Z" fill="#f0f8ff"/><path d="M1,3 L8,4 M1,7 L8,8 M1,11 L8,12" stroke="#3a6a9a" stroke-width="0.8"/><circle cx="14" cy="13" r="3.6" fill="#c8702a"/><circle cx="14" cy="13" r="1.6" fill="#f0c090"/></g>
 <path d="M60.5,158.5 L72.5,170.5 M72.5,158.5 L60.5,170.5" stroke="#cfcfcf" stroke-width="3"/>
 <path d="M97,158 V171 M90.5,164.5 H103.5" stroke="#cfcfcf" stroke-width="3"/>
 <g transform="translate(119,157)"><path d="M0,4 L4,0 L12,0 L12,9 L8,13 L0,13 Z" fill="#a8d4f0"/><path d="M0,4 L8,4 L12,0 M8,4 V13" stroke="#5b8fba" stroke-width="0.8" fill="none"/><path d="M10,7 L10,15 L12,13 L14.5,16 L15.5,15 L13,12 L16,11 Z" fill="#fff" stroke="#222" stroke-width="0.6"/></g>
 <g transform="translate(149,156)"><path d="M0,4 L6,0 L12,1 L6,5 Z M0,8 L6,4 L12,5 L6,9 Z M0,12 L6,8 L12,9 L6,13 Z" fill="#b8b8b8" stroke="#8a8a8a" stroke-width="0.5"/><path d="M8,6 L8,15 L10,13 L12.5,17 L14,16 L11.5,12 L14.5,11.5 Z" fill="#d0d0d0" stroke="#555" stroke-width="0.5"/></g>
 <g transform="translate(180,156)"><path d="M0,4 L6,0 L13,1 L7,5 Z" fill="#9fd0ee"/><path d="M0,8 L6,4 L13,5 L7,9 Z" fill="#c8e6f8"/><path d="M0,12 L6,8 L13,9 L7,13 Z" fill="#eef8ff"/><path d="M0,4 L7,5 M0,8 L7,9 M0,12 L7,13" stroke="#3a6a9a" stroke-width="0.7"/><circle cx="13" cy="11" r="3.2" fill="#dfeef8"/><rect x="12" y="13.5" width="2" height="3.5" fill="#e8e8e8"/></g>
 <g transform="translate(209,156)"><path d="M0,4 L6,0 L13,1 L7,5 Z" fill="#9fd0ee"/><path d="M0,8 L6,4 L13,5 L7,9 Z" fill="#c8e6f8"/><path d="M0,12 L6,8 L13,9 L7,13 Z" fill="#eef8ff"/><path d="M0,4 L7,5 M0,8 L7,9 M0,12 L7,13" stroke="#3a6a9a" stroke-width="0.7"/><path d="M10,12 H16 M13,9 V15 M11,10 L15,14 M15,10 L11,14" stroke="#e8f4ff" stroke-width="1.2"/></g>
 <rect x="21" y="177" width="371" height="182" fill="#ffffff"/>
 <rect x="22" y="178" width="369" height="25" fill="#fcfcfc"/>
 <rect x="151.5" y="178" width="1" height="25" fill="#e6e6e6"/>
 <rect x="176.5" y="178" width="1" height="25" fill="#e6e6e6"/>
 <rect x="209.5" y="178" width="1" height="25" fill="#e6e6e6"/>
 <rect x="254.5" y="178" width="1" height="25" fill="#e6e6e6"/>
 <rect x="301.5" y="178" width="1" height="25" fill="#e6e6e6"/>
 <rect x="338.5" y="178" width="1" height="25" fill="#e6e6e6"/>
 <g font-size="10.6" fill="#111"><text x="28.5" y="195.2">Layers</text><text x="182.6" y="195.2">Hide</text><text x="215.5" y="195.2">Freeze</text><text x="260.4" y="195.2">Render</text><text x="307.2" y="195.2">Color</text><text x="344" y="195.2">Radiosity</text></g>
 <rect x="23" y="203" width="368" height="138" fill="#4a4a4a"/>
 <rect x="23" y="203" width="368" height="133" fill="#575757"/>
 <rect x="26.5" y="206.5" width="8" height="8" fill="none" stroke="#7a7a7a" stroke-width="1"/>
 <path d="M28.5,210.5 H32.5 M30.5,208.5 V212.5" stroke="#7a7a7a" stroke-width="1"/>
 <g transform="translate(41,206)"><path d="M1,0.5 L7,0.5 L11,4 L11,10.5 L4.5,10.5 Z" fill="#ececec"/><path d="M0.5,0.3 H7" stroke="#000" stroke-width="1.3"/><path d="M0.8,0.5 L4.5,10.8" stroke="#000" stroke-width="1.4"/><path d="M3.5,4.2 H11 M4.3,7.3 H11 M4.8,10.4 H11" stroke="#000" stroke-width="1.2"/><path d="M1.5,3 L3.5,4.2 L2,5 Z M2.5,6 L4.3,7.3 L3,8 Z" fill="#000"/></g>
 <text x="56.7" y="213.7" font-size="10.6" fill="#e4e4e4">0 (default)</text>
 <path d="M154.5,211.2 L159,215.7 L166.7,207.2" fill="none" stroke="#000" stroke-width="1.6"/>
 <rect x="186" y="212" width="12.5" height="3" fill="url(#dots)"/>
 <rect x="224.8" y="212" width="12.5" height="3" fill="url(#dots)"/>
 <g transform="translate(270.5,208)"><path d="M0.5,1.5 L5,5.5" stroke="#d8d8e0" stroke-width="1.8"/><ellipse cx="9" cy="5.2" rx="4" ry="3.3" fill="#d8d8e0"/><rect x="8" y="0.8" width="2" height="1.5" fill="#d8d8e0"/></g>
 <rect x="315.3" y="207.5" width="9.5" height="9.5" fill="#7ad8c8" stroke="#000" stroke-width="1"/>
 <g transform="translate(359,204)"><path d="M1,15.8 A7,6.2 0 0 1 15,15.8 Z" fill="#f2e08c"/><path d="M8,1.5 V9 M3.5,7.5 L0.8,4.2 M12.5,7.5 L15.2,4.2" stroke="#000" stroke-width="1.1" fill="none"/><path d="M6,3.5 L8,0.8 L10,3.5 Z M0.2,3.2 L3.2,3.6 L1.2,6 Z M15.8,3.2 L12.8,3.6 L14.8,6 Z" fill="#000"/></g>
 <rect x="23.5" y="222.5" width="127" height="18" fill="#1f5fd0" stroke="#8ab8f0" stroke-width="1"/>
 <rect x="26.5" y="225.5" width="8" height="8" fill="none" stroke="#7a7a7a" stroke-width="1"/>
 <path d="M28.5,229.5 H32.5 M30.5,227.5 V231.5" stroke="#7a7a7a" stroke-width="1"/>
 <g transform="translate(41,225)"><path d="M1,0.5 L7,0.5 L11,4 L11,10.5 L4.5,10.5 Z" fill="#ececec"/><path d="M0.5,0.3 H7" stroke="#000" stroke-width="1.3"/><path d="M0.8,0.5 L4.5,10.8" stroke="#000" stroke-width="1.4"/><path d="M3.5,4.2 H11 M4.3,7.3 H11 M4.8,10.4 H11" stroke="#000" stroke-width="1.2"/><path d="M1.5,3 L3.5,4.2 L2,5 Z M2.5,6 L4.3,7.3 L3,8 Z" fill="#000"/></g>
 <text x="56.7" y="232.7" font-size="10.6" fill="#9fd0ff">Controls</text>
 <rect x="155" y="226.8" width="9.5" height="9.5" fill="#3c3c3c" stroke="#f2f2f2" stroke-width="1.6"/>
 <ellipse cx="193" cy="227.5" rx="4.2" ry="4.6" fill="#d8e8f0"/><path d="M190,229.5 L196,229.5 L194,234 L192,234 Z" fill="#d8e8f0"/><rect x="192" y="234" width="2" height="3.5" fill="#f0f0f0"/>
 <rect x="224.8" y="231" width="12.5" height="3" fill="url(#dots)"/>
 <g transform="translate(270.5,227)"><path d="M0.5,1.5 L5,5.5" stroke="#d8d8e0" stroke-width="1.8"/><ellipse cx="9" cy="5.2" rx="4" ry="3.3" fill="#d8d8e0"/><rect x="8" y="0.8" width="2" height="1.5" fill="#d8d8e0"/></g>
 <rect x="315.3" y="226.5" width="9.5" height="9.5" fill="#c09840" stroke="#000" stroke-width="1"/>
 <g transform="translate(359,223)"><path d="M1,15.8 A7,6.2 0 0 1 15,15.8 Z" fill="#f2e08c"/><path d="M8,1.5 V9 M3.5,7.5 L0.8,4.2 M12.5,7.5 L15.2,4.2" stroke="#000" stroke-width="1.1" fill="none"/><path d="M6,3.5 L8,0.8 L10,3.5 Z M0.2,3.2 L3.2,3.6 L1.2,6 Z M15.8,3.2 L12.8,3.6 L14.8,6 Z" fill="#000"/></g>
 <rect x="26.5" y="244.5" width="8" height="8" fill="none" stroke="#7a7a7a" stroke-width="1"/>
 <path d="M28.5,248.5 H32.5 M30.5,246.5 V250.5" stroke="#7a7a7a" stroke-width="1"/>
 <g transform="translate(41,244)"><path d="M1,0.5 L7,0.5 L11,4 L11,10.5 L4.5,10.5 Z" fill="#ececec"/><path d="M0.5,0.3 H7" stroke="#000" stroke-width="1.3"/><path d="M0.8,0.5 L4.5,10.8" stroke="#000" stroke-width="1.4"/><path d="M3.5,4.2 H11 M4.3,7.3 H11 M4.8,10.4 H11" stroke="#000" stroke-width="1.2"/><path d="M1.5,3 L3.5,4.2 L2,5 Z M2.5,6 L4.3,7.3 L3,8 Z" fill="#000"/></g>
 <text x="56.7" y="251.7" font-size="10.6" fill="#e4e4e4">Hidden</text>
 <rect x="155" y="245.8" width="9.5" height="9.5" fill="#3c3c3c" stroke="#f2f2f2" stroke-width="1.6"/>
 <rect x="186" y="250" width="12.5" height="3" fill="url(#dots)"/>
 <rect x="224.8" y="250" width="12.5" height="3" fill="url(#dots)"/>
 <g transform="translate(270.5,246)"><path d="M0.5,1.5 L5,5.5" stroke="#d8d8e0" stroke-width="1.8"/><ellipse cx="9" cy="5.2" rx="4" ry="3.3" fill="#d8d8e0"/><rect x="8" y="0.8" width="2" height="1.5" fill="#d8d8e0"/></g>
 <rect x="315.3" y="245.5" width="9.5" height="9.5" fill="#8a107a" stroke="#000" stroke-width="1"/>
 <g transform="translate(359,242)"><path d="M1,15.8 A7,6.2 0 0 1 15,15.8 Z" fill="#f2e08c"/><path d="M8,1.5 V9 M3.5,7.5 L0.8,4.2 M12.5,7.5 L15.2,4.2" stroke="#000" stroke-width="1.1" fill="none"/><path d="M6,3.5 L8,0.8 L10,3.5 Z M0.2,3.2 L3.2,3.6 L1.2,6 Z M15.8,3.2 L12.8,3.6 L14.8,6 Z" fill="#000"/></g>
 <rect x="26.5" y="263.5" width="8" height="8" fill="none" stroke="#7a7a7a" stroke-width="1"/>
 <path d="M28.5,267.5 H32.5 M30.5,265.5 V269.5" stroke="#7a7a7a" stroke-width="1"/>
 <g transform="translate(41,263)"><path d="M1,0.5 L7,0.5 L11,4 L11,10.5 L4.5,10.5 Z" fill="#ececec"/><path d="M0.5,0.3 H7" stroke="#000" stroke-width="1.3"/><path d="M0.8,0.5 L4.5,10.8" stroke="#000" stroke-width="1.4"/><path d="M3.5,4.2 H11 M4.3,7.3 H11 M4.8,10.4 H11" stroke="#000" stroke-width="1.2"/><path d="M1.5,3 L3.5,4.2 L2,5 Z M2.5,6 L4.3,7.3 L3,8 Z" fill="#000"/></g>
 <text x="56.7" y="270.7" font-size="10.6" fill="#e4e4e4">IKs</text>
 <rect x="155" y="264.8" width="9.5" height="9.5" fill="#3c3c3c" stroke="#f2f2f2" stroke-width="1.6"/>
 <rect x="186" y="269" width="12.5" height="3" fill="url(#dots)"/>
 <rect x="224.8" y="269" width="12.5" height="3" fill="url(#dots)"/>
 <g transform="translate(270.5,265)"><path d="M0.5,1.5 L5,5.5" stroke="#d8d8e0" stroke-width="1.8"/><ellipse cx="9" cy="5.2" rx="4" ry="3.3" fill="#d8d8e0"/><rect x="8" y="0.8" width="2" height="1.5" fill="#d8d8e0"/></g>
 <rect x="315.3" y="264.5" width="9.5" height="9.5" fill="#a8a8f0" stroke="#000" stroke-width="1"/>
 <g transform="translate(359,261)"><path d="M1,15.8 A7,6.2 0 0 1 15,15.8 Z" fill="#f2e08c"/><path d="M8,1.5 V9 M3.5,7.5 L0.8,4.2 M12.5,7.5 L15.2,4.2" stroke="#000" stroke-width="1.1" fill="none"/><path d="M6,3.5 L8,0.8 L10,3.5 Z M0.2,3.2 L3.2,3.6 L1.2,6 Z M15.8,3.2 L12.8,3.6 L14.8,6 Z" fill="#000"/></g>
 <rect x="26.5" y="282.5" width="8" height="8" fill="none" stroke="#7a7a7a" stroke-width="1"/>
 <path d="M28.5,286.5 H32.5 M30.5,284.5 V288.5" stroke="#7a7a7a" stroke-width="1"/>
 <g transform="translate(41,282)"><path d="M1,0.5 L7,0.5 L11,4 L11,10.5 L4.5,10.5 Z" fill="#ececec"/><path d="M0.5,0.3 H7" stroke="#000" stroke-width="1.3"/><path d="M0.8,0.5 L4.5,10.8" stroke="#000" stroke-width="1.4"/><path d="M3.5,4.2 H11 M4.3,7.3 H11 M4.8,10.4 H11" stroke="#000" stroke-width="1.2"/><path d="M1.5,3 L3.5,4.2 L2,5 Z M2.5,6 L4.3,7.3 L3,8 Z" fill="#000"/></g>
 <text x="56.7" y="289.7" font-size="10.6" fill="#e4e4e4">Light&amp;Camera</text>
 <rect x="155" y="283.8" width="9.5" height="9.5" fill="#3c3c3c" stroke="#f2f2f2" stroke-width="1.6"/>
 <rect x="186" y="288" width="12.5" height="3" fill="url(#dots)"/>
 <rect x="224.8" y="288" width="12.5" height="3" fill="url(#dots)"/>
 <g transform="translate(270.5,284)"><path d="M0.5,1.5 L5,5.5" stroke="#d8d8e0" stroke-width="1.8"/><ellipse cx="9" cy="5.2" rx="4" ry="3.3" fill="#d8d8e0"/><rect x="8" y="0.8" width="2" height="1.5" fill="#d8d8e0"/></g>
 <rect x="315.3" y="283.5" width="9.5" height="9.5" fill="#d070e8" stroke="#000" stroke-width="1"/>
 <g transform="translate(359,280)"><path d="M1,15.8 A7,6.2 0 0 1 15,15.8 Z" fill="#f2e08c"/><path d="M8,1.5 V9 M3.5,7.5 L0.8,4.2 M12.5,7.5 L15.2,4.2" stroke="#000" stroke-width="1.1" fill="none"/><path d="M6,3.5 L8,0.8 L10,3.5 Z M0.2,3.2 L3.2,3.6 L1.2,6 Z M15.8,3.2 L12.8,3.6 L14.8,6 Z" fill="#000"/></g>
 <rect x="26.5" y="301.5" width="8" height="8" fill="none" stroke="#7a7a7a" stroke-width="1"/>
 <path d="M28.5,305.5 H32.5 M30.5,303.5 V307.5" stroke="#7a7a7a" stroke-width="1"/>
 <g transform="translate(41,301)"><path d="M1,0.5 L7,0.5 L11,4 L11,10.5 L4.5,10.5 Z" fill="#ececec"/><path d="M0.5,0.3 H7" stroke="#000" stroke-width="1.3"/><path d="M0.8,0.5 L4.5,10.8" stroke="#000" stroke-width="1.4"/><path d="M3.5,4.2 H11 M4.3,7.3 H11 M4.8,10.4 H11" stroke="#000" stroke-width="1.2"/><path d="M1.5,3 L3.5,4.2 L2,5 Z M2.5,6 L4.3,7.3 L3,8 Z" fill="#000"/></g>
 <text x="56.7" y="308.7" font-size="10.6" fill="#e4e4e4">Model</text>
 <rect x="155" y="302.8" width="9.5" height="9.5" fill="#3c3c3c" stroke="#f2f2f2" stroke-width="1.6"/>
 <rect x="186" y="307" width="12.5" height="3" fill="url(#dots)"/>
 <path d="M226,306.5 H236 M231,301.5 V311.5 M227.5,303 L234.5,310 M234.5,303 L227.5,310" stroke="#ffffff" stroke-width="1.6"/><circle cx="231" cy="306.5" r="1.8" fill="#2c3440"/>
 <g transform="translate(270.5,303)"><path d="M0.5,1.5 L5,5.5" stroke="#d8d8e0" stroke-width="1.8"/><ellipse cx="9" cy="5.2" rx="4" ry="3.3" fill="#d8d8e0"/><rect x="8" y="0.8" width="2" height="1.5" fill="#d8d8e0"/></g>
 <rect x="315.3" y="302.5" width="9.5" height="9.5" fill="#101080" stroke="#000" stroke-width="1"/>
 <g transform="translate(359,299)"><path d="M1,15.8 A7,6.2 0 0 1 15,15.8 Z" fill="#f2e08c"/><path d="M8,1.5 V9 M3.5,7.5 L0.8,4.2 M12.5,7.5 L15.2,4.2" stroke="#000" stroke-width="1.1" fill="none"/><path d="M6,3.5 L8,0.8 L10,3.5 Z M0.2,3.2 L3.2,3.6 L1.2,6 Z M15.8,3.2 L12.8,3.6 L14.8,6 Z" fill="#000"/></g>
 <rect x="26.5" y="320.5" width="8" height="8" fill="none" stroke="#7a7a7a" stroke-width="1"/>
 <path d="M28.5,324.5 H32.5 M30.5,322.5 V326.5" stroke="#7a7a7a" stroke-width="1"/>
 <g transform="translate(41,320)"><path d="M1,0.5 L7,0.5 L11,4 L11,10.5 L4.5,10.5 Z" fill="#ececec"/><path d="M0.5,0.3 H7" stroke="#000" stroke-width="1.3"/><path d="M0.8,0.5 L4.5,10.8" stroke="#000" stroke-width="1.4"/><path d="M3.5,4.2 H11 M4.3,7.3 H11 M4.8,10.4 H11" stroke="#000" stroke-width="1.2"/><path d="M1.5,3 L3.5,4.2 L2,5 Z M2.5,6 L4.3,7.3 L3,8 Z" fill="#000"/></g>
 <text x="56.7" y="327.7" font-size="10.6" fill="#e4e4e4">Skeleton</text>
 <rect x="155" y="321.8" width="9.5" height="9.5" fill="#3c3c3c" stroke="#f2f2f2" stroke-width="1.6"/>
 <rect x="186" y="326" width="12.5" height="3" fill="url(#dots)"/>
 <rect x="224.8" y="326" width="12.5" height="3" fill="url(#dots)"/>
 <g transform="translate(270.5,322)"><path d="M0.5,1.5 L5,5.5" stroke="#d8d8e0" stroke-width="1.8"/><ellipse cx="9" cy="5.2" rx="4" ry="3.3" fill="#d8d8e0"/><rect x="8" y="0.8" width="2" height="1.5" fill="#d8d8e0"/></g>
 <rect x="315.3" y="321.5" width="9.5" height="9.5" fill="#f0b0e8" stroke="#000" stroke-width="1"/>
 <g transform="translate(359,318)"><path d="M1,15.8 A7,6.2 0 0 1 15,15.8 Z" fill="#f2e08c"/><path d="M8,1.5 V9 M3.5,7.5 L0.8,4.2 M12.5,7.5 L15.2,4.2" stroke="#000" stroke-width="1.1" fill="none"/><path d="M6,3.5 L8,0.8 L10,3.5 Z M0.2,3.2 L3.2,3.6 L1.2,6 Z M15.8,3.2 L12.8,3.6 L14.8,6 Z" fill="#000"/></g>
 <rect x="22" y="341.5" width="369" height="17" fill="#f0f0f0"/>
 <rect x="40" y="342.5" width="330" height="15" fill="#cdcdcd"/>
 <path d="M34,346 L30,350 L34,354" fill="none" stroke="#555" stroke-width="1.6"/>
 <path d="M379,346 L383,350 L379,354" fill="none" stroke="#555" stroke-width="1.6"/>
</svg>
</body></html>
